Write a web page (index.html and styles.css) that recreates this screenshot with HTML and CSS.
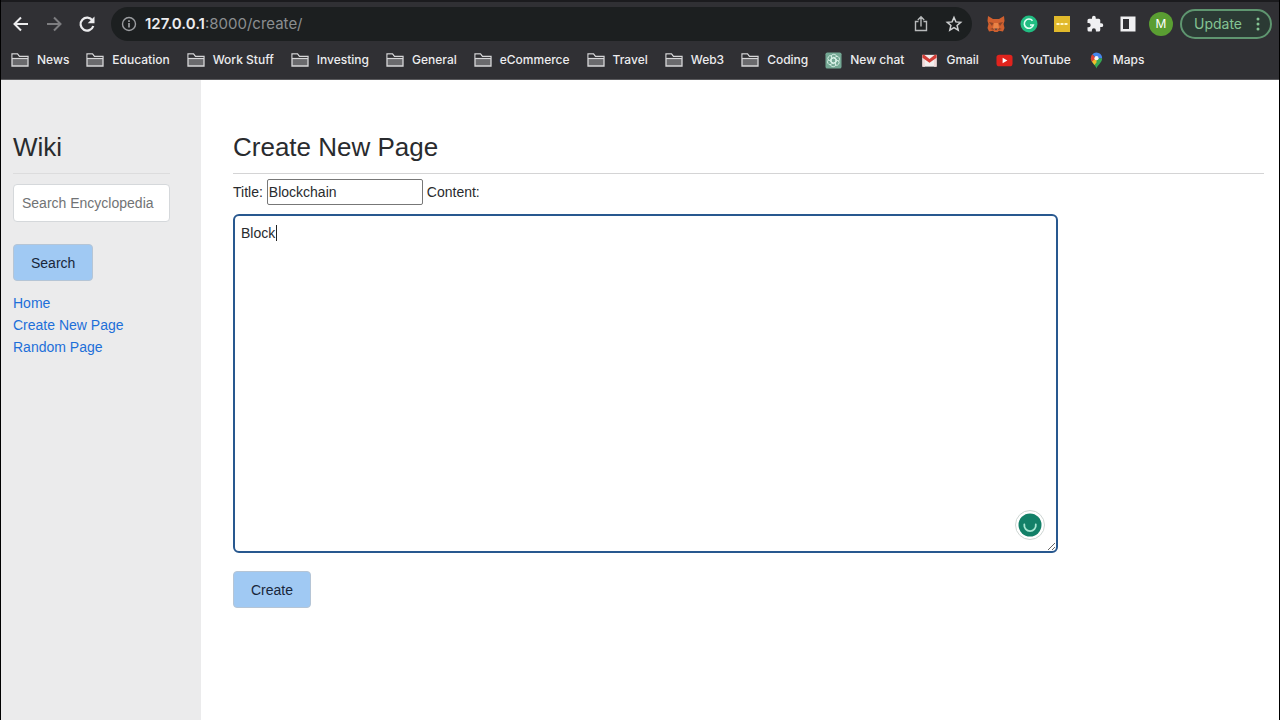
FILE: index.html
```html
<!DOCTYPE html>
<html lang="en">
<head>
<meta charset="utf-8">
<title>Create New Page</title>
<link rel="stylesheet" href="styles.css">
</head>
<body>
<svg class="defs" width="0" height="0" aria-hidden="true">
  <symbol id="folder" viewBox="0 0 18 16"><path d="M1 14V2h5.500l2 2.500H17V14z" fill="#6a6a6d" stroke="#d6d6d8" stroke-width="1.300"/><path d="M1.600 2.600h4.600l1.800 2.500h8.400v1H1.600z" fill="#303034"/><path d="M1 6.500h16" stroke="#d6d6d8" stroke-width="1.200"/></symbol>
</svg>
<header class="browser">
  <div class="toolbar">
    <button class="tool" aria-label="Back"><svg width="18" height="18" viewBox="0 0 18 18"><path d="M16 9H3M9 2.500 2.500 9 9 15.500" fill="none" stroke="#ececee" stroke-width="2"/></svg></button>
    <button class="tool" aria-label="Forward"><svg width="18" height="18" viewBox="0 0 18 18"><path d="M2 9h13M9 2.500 15.500 9 9 15.500" fill="none" stroke="#7d7d80" stroke-width="2"/></svg></button>
    <button class="tool" aria-label="Reload"><svg width="18" height="18" viewBox="0 0 18 18"><path d="M14.500 5.500A6.500 6.500 0 1 0 15.300 11" fill="none" stroke="#ececee" stroke-width="2.200"/><path d="M16.500 1.500v6.800H9.700z" fill="#ececee"/></svg></button>
    <div class="address">
      <svg width="16" height="16" viewBox="0 0 16 16"><circle cx="8" cy="8" r="6.500" fill="none" stroke="#9b9da0" stroke-width="1.400"/><path d="M8 7v4.500M8 4.300v1.600" stroke="#9b9da0" stroke-width="1.700"/></svg>
      <div class="url"><b>127.0.0.1</b>:8000/create/</div>
      <button class="tool" aria-label="Share"><svg width="18" height="18" viewBox="0 0 18 18"><path d="M6.500 6.500h-3v9h11v-9h-3M9 11.500V2M5.800 5 9 1.800 12.200 5" fill="none" stroke="#b8babb" stroke-width="1.400"/></svg></button>
      <button class="tool" aria-label="Bookmark"><svg width="18" height="18" viewBox="0 0 18 18"><path d="m9 2.500 1.900 4.400 4.800.4-3.600 3.200 1.100 4.700L9 12.700l-4.200 2.500 1.100-4.700-3.600-3.200 4.800-.4z" fill="none" stroke="#d0d2d3" stroke-width="1.500"/></svg></button>
    </div>
    <div class="extensions">
      <button class="tool" aria-label="Fox wallet"><svg width="18" height="18" viewBox="0 0 18 18"><path d="m1 1 5 3h6l5-3 .5 5-1 3 1 4-1.500 3.500-4-.8L10.500 17h-3L6 15.700l-4 .8L.5 13l1-4-1-3z" fill="#d0602f"/><path d="m2 7 4.500 1L5 11zm14 0-4.500 1 1.500 3zM3 14l3-1 1 2zm12 0-3-1-1 2z" fill="#8a4529"/><path d="M7 8h4l1 5-3 2-3-2z" fill="#e98346"/><path d="M7.200 13.500h3.600L9 15.500z" fill="#4b4145"/></svg></button>
      <button class="tool" aria-label="Writing assistant"><svg width="18" height="18" viewBox="0 0 18 18"><circle cx="9" cy="9" r="8.500" fill="#21bd82"/><path d="M12.500 5.800A4.600 4.600 0 1 0 13.300 10H10" fill="none" stroke="#e4fff5" stroke-width="1.600"/></svg></button>
      <button class="tool" aria-label="Notes"><svg width="18" height="18" viewBox="0 0 18 18"><path d="M1 1h16v16H1z" fill="#e1b92b"/><path d="M3.500 9h11" stroke="#fff7c6" stroke-width="2.200" stroke-dasharray="3 1"/></svg></button>
      <button class="tool" aria-label="Extensions"><svg width="18" height="18" viewBox="0 0 24 24"><path d="M20.500 11H19V7a2 2 0 0 0-2-2h-4V3.500a2.500 2.500 0 0 0-5 0V5H4a2 2 0 0 0-2 2v3.800h1.500a2.700 2.700 0 0 1 0 5.400H2V20a2 2 0 0 0 2 2h3.800v-1.500a2.700 2.700 0 0 1 5.400 0V22H17a2 2 0 0 0 2-2v-4h1.500a2.500 2.500 0 0 0 0-5z" fill="#f0f0f2"/></svg></button>
      <button class="tool" aria-label="Side panel"><svg width="18" height="18" viewBox="0 0 18 18"><path d="M1.500 1.500h15v15h-15z" fill="#f0f0f2"/><path d="M4 4h6v10H4z" fill="#303034"/></svg></button>
    </div>
    <button class="avatar" aria-label="Profile">M</button>
    <button class="update">Update <svg width="4" height="16" viewBox="0 0 4 16"><g fill="#84c493"><circle cx="2" cy="3" r="1.500"/><circle cx="2" cy="8" r="1.500"/><circle cx="2" cy="13" r="1.500"/></g></svg></button>
  </div>
  <nav class="bookmarks" aria-label="Bookmarks">
    <a href="#"><svg><use href="#folder"/></svg>News</a>
    <a href="#"><svg><use href="#folder"/></svg>Education</a>
    <a href="#"><svg><use href="#folder"/></svg>Work Stuff</a>
    <a href="#"><svg><use href="#folder"/></svg>Investing</a>
    <a href="#"><svg><use href="#folder"/></svg>General</a>
    <a href="#"><svg><use href="#folder"/></svg>eCommerce</a>
    <a href="#"><svg><use href="#folder"/></svg>Travel</a>
    <a href="#"><svg><use href="#folder"/></svg>Web3</a>
    <a href="#"><svg><use href="#folder"/></svg>Coding</a>
    <a class="site" href="#"><svg viewBox="0 0 18 18"><rect x=".5" y=".5" width="17" height="17" rx="2" fill="#74a894"/><g fill="none" stroke="#d8f0e6" stroke-width=".9"><path id="petal" d="M9 6.200 11.600 7.600V11L9 12.400M6.500 4.500a3 3 0 0 1 5.800.2L9 6.600"/><use href="#petal" transform="rotate(60 9 9)"/><use href="#petal" transform="rotate(120 9 9)"/><use href="#petal" transform="rotate(180 9 9)"/><use href="#petal" transform="rotate(240 9 9)"/><use href="#petal" transform="rotate(300 9 9)"/></g></svg>New chat</a>
    <a class="site" href="#"><svg viewBox="0 0 18 18"><path d="M1.500 3h15v12.500h-15z" fill="#f3eeee"/><path d="M1.500 15.500V3L9 9l7.500-6v12.500h-2.700v-8L9 11.500l-4.800-4v8z" fill="#f1d9d9"/><path d="M1.500 6V3h1.800L9 7.500 14.700 3h1.800v3L9 11.500z" fill="#d33d37"/></svg>Gmail</a>
    <a class="site" href="#"><svg viewBox="0 0 18 18"><rect x=".5" y="2.800" width="17" height="12.400" rx="3" fill="#e0231d"/><path d="m7 6 5 3-5 3z" fill="#fff"/></svg>YouTube</a>
    <a class="site" href="#"><svg viewBox="0 0 18 18"><path d="M9 17.500C8 13.500 3 11.500 3 6.500h12C15 11.500 10 13.500 9 17.500z" fill="#36a853"/><path d="M3 6.500A6 6 0 0 1 4.600 2.500L9 6.500l-4 4.500C3.500 9.500 3 8 3 6.500z" fill="#dd4336"/><path d="M4.300 10 9 6v5l-2.200 2.700C6 12.500 5 11.500 4.300 10z" fill="#f2bc2b"/><path d="M4.600 2.500A6 6 0 0 1 15 6.500H9z" fill="#4586ec"/><circle cx="9" cy="6.500" r="2.200" fill="#f7f7f7"/></svg>Maps</a>
  </nav>
</header>
<div class="page">
  <aside class="sidebar">
    <h2>Wiki</h2>
    <form class="search">
      <input type="text" aria-label="Search Encyclopedia" placeholder="Search Encyclopedia">
      <button class="primary" type="button">Search</button>
    </form>
    <nav class="links" aria-label="Wiki pages">
      <a href="#">Home</a>
      <a href="#">Create New Page</a>
      <a href="#">Random Page</a>
    </nav>
  </aside>
  <main class="main">
    <h1>Create New Page</h1>
    <form class="editor">
      <div class="fields">
        <label for="title">Title:</label>
        <input id="title" type="text" value="Blockchain">
        <label for="content">Content:</label>
      </div>
      <div class="content">
        <textarea id="content">Block</textarea>
        <span class="caret"></span>
        <svg class="status" width="32" height="32" viewBox="0 0 32 32"><circle cx="16" cy="16" r="14.500" fill="#fff" stroke="#ced6d3"/><circle cx="16" cy="16" r="11.500" fill="#128068"/><path d="M10.300 15.500a5.800 5.800 0 1 0 11.500 0" fill="none" stroke="#a7e6d2" stroke-width="1.800" stroke-linecap="round"/></svg>
      </div>
      <button class="primary" type="button">Create</button>
    </form>
  </main>
</div>
</body>
</html>
```
FILE: styles.css
```css
* { box-sizing: border-box; }
body {
  margin: 0;
  min-height: 100vh;
  display: flex;
  flex-direction: column;
  border: solid #000;
  border-width: 0 1px;
  background: #fff;
  color: #292b2e;
  font: 14px/22px "Liberation Sans", Arial, sans-serif;
}
button, input, textarea { font: inherit; color: inherit; }
a { text-decoration: none; }
.defs { position: absolute; }

.browser {
  background: #303034;
  border-top: 2px solid #1b1b1e;
  border-bottom: 1px solid #5a5a5d;
  color: #ececee;
  font-family: Inter, Roboto, sans-serif;
}
.toolbar {
  display: flex;
  align-items: center;
  height: 44px;
  padding: 0 7px 0 11px;
}
.tool {
  display: flex;
  padding: 0;
  border: 0;
  background: none;
}
.toolbar > .tool { margin-right: 15px; }
.address {
  flex: 1;
  display: flex;
  align-items: center;
  gap: 15px;
  height: 34px;
  padding: 0 9px 0 10px;
  border-radius: 17px;
  background: #1c1f20;
}
.url {
  flex: 1;
  margin-left: -7px;
  color: #8b8e90;
  font-size: 15px;
}
.url b { color: #ececee; font-weight: 600; }
.extensions {
  display: flex;
  gap: 15px;
  margin: 0 12px 0 15px;
}
.avatar {
  width: 24px;
  height: 24px;
  margin-right: 7px;
  padding: 0;
  border: 0;
  border-radius: 50%;
  background: #5a9e32;
  color: #fff;
  font-size: 12px;
  line-height: 24px;
}
.update {
  display: flex;
  align-items: center;
  gap: 14px;
  height: 30px;
  padding: 0 10px 0 12px;
  border: 2px solid #5f9670;
  border-radius: 15px;
  background: #2b3a34;
  color: #84c493;
}
.bookmarks {
  display: flex;
  gap: 17px;
  height: 33px;
  padding: 3px 10px 8px;
}
.bookmarks a {
  display: flex;
  align-items: center;
  gap: 8px;
  color: #ececee;
  font-size: 12px;
  font-weight: 500;
  white-space: nowrap;
}
.bookmarks svg { flex: none; width: 18px; height: 16px; }
.bookmarks .site svg { width: 17px; height: 17px; }

.page { flex: 1; display: flex; }
.sidebar {
  flex: none;
  width: 200px;
  padding: 50px 31px 0 12px;
  background: #ebebec;
}
.main { flex: 1; padding: 50px 15px 0 32px; }
h1, h2 {
  margin: 0;
  padding-bottom: 9px;
  border-bottom: 1px solid #d4d4d5;
  font-size: 26px;
  line-height: 34px;
  font-weight: 400;
}
h2 { border-color: #dcdcdd; }
.search {
  display: flex;
  flex-direction: column;
  align-items: flex-start;
  gap: 22px;
  padding-top: 10px;
}
.search input {
  width: 100%;
  height: 38px;
  padding: 0 4px 0 8px;
  border: 1px solid #d5d8db;
  border-radius: 4px;
  background: #fff;
}
.search input::placeholder { color: #717375; opacity: 1; }
.primary {
  height: 37px;
  padding: 0 17px;
  border: 1px solid #b5c5d6;
  border-radius: 4px;
  background: #a0c9f3;
  color: #18263a;
}
.links {
  display: flex;
  flex-direction: column;
  padding-top: 11px;
}
.links a { color: #1d6fd9; }
.fields {
  display: flex;
  align-items: center;
  gap: 4px;
  padding-top: 5px;
}
.fields input {
  width: 156px;
  height: 26px;
  padding: 0 1px;
  border: 1px solid #777;
  border-radius: 2px;
}
.content {
  position: relative;
  width: 80%;
  margin: 9px 0 18px;
}
.content textarea {
  display: block;
  width: 100%;
  height: 339px;
  padding: 6px;
  border: 2px solid #28588f;
  border-radius: 6px;
  outline: 0;
  background: #fff;
}
.caret {
  position: absolute;
  left: 43px;
  top: 11px;
  width: 1px;
  height: 16px;
  background: #222;
}
.status { position: absolute; right: 12px; bottom: 12px; }
```
